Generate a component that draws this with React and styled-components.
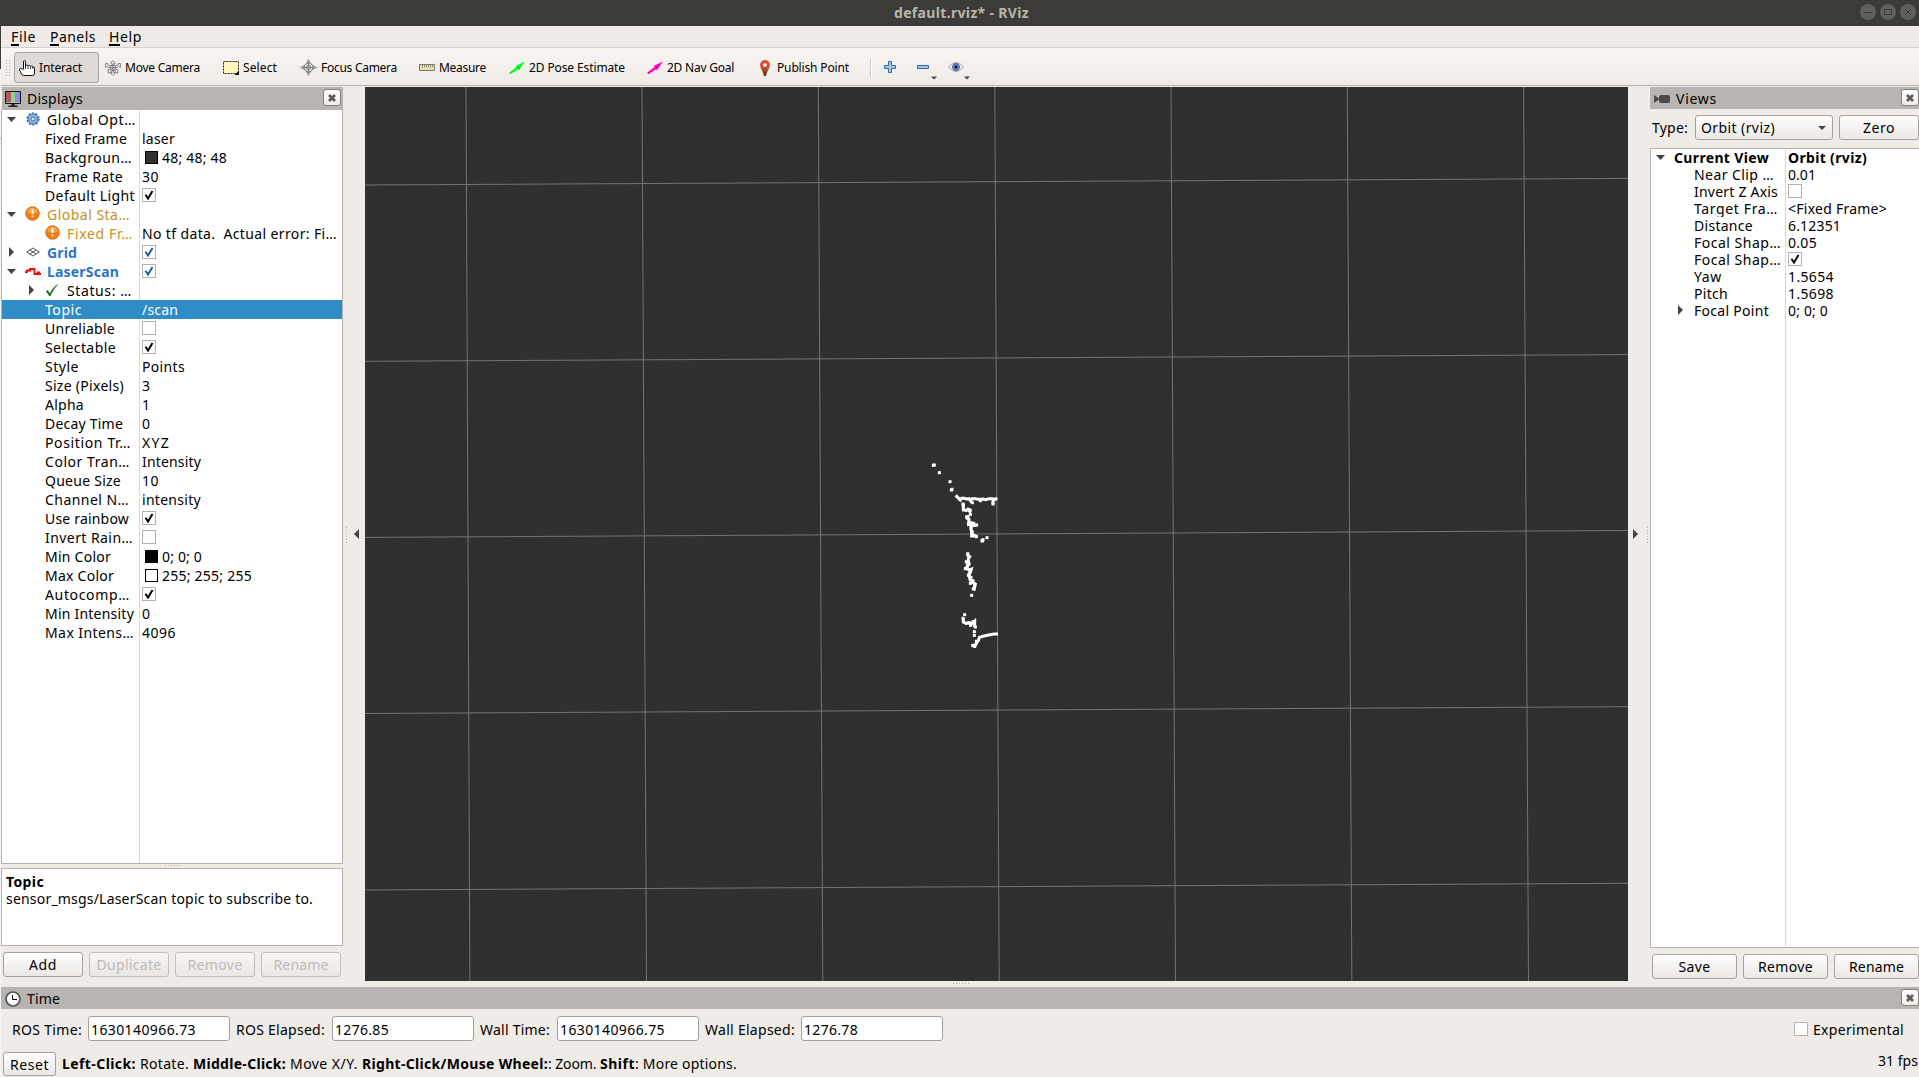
import React, { useLayoutEffect, useRef, useState } from 'react';
import styled, { createGlobalStyle, css, ThemeProvider } from 'styled-components';

const theme = {
  window: '#efebe7',
  titlebar: '#3c3b37',
  dock: '#b8b4b1',
  line: '#b4b0ad',
  selected: '#308cc6',
  link: '#2a76c6',
  warn: '#cb901b',
  dark: '#303030',
  bold: 700,
  fontSize: { s: '12px', m: '14px' },
};

const GlobalStyle = createGlobalStyle`
  *, *::before, *::after {
    box-sizing: border-box;
  }

  body {
    margin: 0;
    overflow: hidden;
    font-family: 'Noto Sans', 'Open Sans', sans-serif;
    font-size: 14px;
    color: #000;
  }

  svg {
    display: block;
    flex-shrink: 0;
  }
`;

const StyledText = styled.span.withConfig({
  shouldForwardProp: prop => !['small', 'bold'].includes(prop),
})`
  display: inline-block;
  white-space: pre;
  font-size: ${({ small, theme }) => (small ? theme.fontSize.s : theme.fontSize.m)};
  font-weight: ${({ bold, theme }) => (bold ? theme.bold : 400)};
`;

// spreads the letters so that a label takes the given width
const Text = ({ w, children, ...rest }) => {
  const ref = useRef(null);
  const [spacing, setSpacing] = useState(0);

  useLayoutEffect(() => {
    if (w) {
      const natural = ref.current.getBoundingClientRect().width;
      setSpacing((w + 1 - natural) / ref.current.textContent.length);
    }
  }, [w]);

  return (
    <StyledText ref={ref} style={{ letterSpacing: `${spacing}px` }} {...rest}>
      {children}
    </StyledText>
  );
};

const Window = styled.div`
  width: 1919px;
  height: 1077px;
  padding-left: 1px;
  display: flex;
  flex-direction: column;
  overflow: hidden;
  background: linear-gradient(#3c3b37 69px, #f6f5f4 69px, #f6f5f4 138px, #bbb 138px, #bbb 139px, #f6f5f4 139px) 0 0 / 1px
    100% no-repeat ${({ theme }) => theme.window};
`;

const TitleBar = styled.header`
  flex: none;
  height: 26px;
  margin-left: -1px;
  padding: 0 3px 0 894px;
  display: flex;
  align-items: center;
  justify-content: space-between;
  line-height: 24px;
  color: #b9b5a9;
  background: ${({ theme }) => theme.titlebar};
`;

const WindowButtons = styled.div`
  display: flex;
  gap: 4px;
  padding-bottom: 2px;
`;

const WindowButton = styled.span`
  width: 16px;
  height: 16px;
  border-radius: 50%;
  background: #62605b;
`;

const MenuBar = styled.nav`
  flex: none;
  height: 22px;
  padding-left: 10px;
  display: flex;
  line-height: 21px;
  border-bottom: 1px solid #d3cfcb;
`;

const MenuItem = styled.span`
  width: ${({ $width }) => $width}px;

  u {
    text-underline-offset: 2px;
    text-decoration-thickness: 2px;
  }
`;

const ToolBar = styled.div`
  flex: none;
  height: 38px;
  padding: 4px 0 2px 4px;
  display: flex;
  border-bottom: 1px solid #b6b2ae;
  background: linear-gradient(#f8f5f2, #efebe7);
`;

const ToolGrip = styled.i`
  width: 5px;
  height: 17px;
  margin: 7px 4px 0 0;
  background: radial-gradient(circle at 50% 50%, #aeaaa6 0.5px, transparent 1px) 0 0 / 3px 3px;
`;

const Tool = styled.div`
  flex: none;
  width: ${({ $width }) => $width}px;
  height: 31px;
  padding-left: 4px;
  display: flex;
  align-items: center;
  gap: 4px;
  border: 1px solid transparent;
  border-radius: 3px;
  line-height: 16px;

  ${({ $active }) =>
    $active &&
    css`
      margin-right: 1px;
      border-color: #aaa6a3;
      background: #dedad7;
    `}
`;

const Separator = styled.i`
  width: 2px;
  height: 19px;
  margin-top: 6px;
  border-left: 1px solid #d0ccc8;
  background: #fff;
`;

const ActionList = styled.div`
  display: flex;
  align-items: flex-start;
  padding: 9px 0 0 12px;
`;

const Action = styled.span`
  width: ${({ $width }) => $width}px;
`;

const Workspace = styled.main`
  flex: none;
  height: 901px;
  padding-top: 1px;
  display: grid;
  grid-template-columns: 342px 22px 1263px 22px 269px;
`;

const Dock = styled.section`
  min-height: 0;
  display: flex;
  flex-direction: column;
`;

const DockTitle = styled.div`
  flex: none;
  height: ${({ $height }) => $height || 22}px;
  margin-left: ${({ $indent }) => $indent || 0}px;
  padding: 1px ${({ $end }) => $end || 0}px 0 ${({ $pad }) => $pad}px;
  display: flex;
  align-items: center;
  gap: 6px;
  line-height: 22px;
  background: ${({ theme }) => theme.dock};
`;

const CloseButton = styled.span`
  align-self: flex-start;
  width: 18px;
  height: 17px;
  margin: 1px 0 0 auto;
  display: grid;
  place-items: center;
  border: 1px solid #85817e;
  border-radius: 3px;
  background: linear-gradient(#fff, #eeebe8);
`;

const Tree = styled.div`
  flex: none;
  height: ${({ $height }) => $height}px;
  border: solid ${({ theme }) => theme.line};
  border-width: ${({ $open }) => ($open ? '1px 0 1px 1px' : '0 1px 1px')};
  background: linear-gradient(#d8d8d8, #d8d8d8) ${({ $divider }) => $divider}px 0 / 1px 100% no-repeat #fff;
`;

const Row = styled.div`
  height: ${({ $height }) => $height}px;
  line-height: ${({ $height }) => $height}px;
  display: grid;
  grid-template-columns: ${({ $divider }) => $divider}px 1fr;

  ${({ $selected, theme }) =>
    $selected &&
    css`
      color: #fff;
      background: ${theme.selected};
    `}
`;

const NameCell = styled.div`
  padding-left: ${({ $indent }) => $indent}px;
  display: flex;
  overflow: hidden;
`;

const Slot = styled.span`
  flex: none;
  width: ${({ $width }) => $width}px;
  height: 100%;
  padding-bottom: 2px;
  display: flex;
  align-items: center;
`;

const Name = styled.span`
  color: ${({ $color }) => $color || 'inherit'};
`;

const ValueCell = styled.div`
  padding-left: 3px;
  display: flex;
`;

const Box = styled.span`
  flex: none;
  width: 14px;
  height: 14px;
  margin-top: ${({ $top }) => $top || 0}px;
  display: grid;
  place-items: center;
  border: 1px solid #b5b1ae;
  background: #fff;
`;

const Swatch = styled.span`
  width: 13px;
  height: 13px;
  margin: 3px 4px 0 3px;
  border: 1px solid #000;
  background: ${({ color }) => color};
`;

const Grip = styled.i`
  width: ${({ $vertical }) => ($vertical ? 1 : 17)}px;
  height: ${({ $vertical }) => ($vertical ? 17 : 1)}px;
  background: repeating-linear-gradient(
    ${({ $vertical }) => ($vertical ? '180deg' : '90deg')},
    #b3afab 0 1px,
    transparent 1px 3px
  );
`;

const Splitter = styled.div`
  height: ${({ $height }) => $height}px;
  padding: ${({ $padding }) => $padding};
  display: flex;
  align-items: flex-start;
  justify-content: center;
`;

const SideHandle = styled.div`
  height: 894px;
  padding: ${({ $right }) => ($right ? '440px 2px 0 5px' : '440px 6px 0 3px')};
  display: flex;
  justify-content: space-between;
  align-items: flex-start;

  svg {
    margin-top: 2px;
  }
`;

const Description = styled.div`
  flex: none;
  height: 78px;
  padding: 4px 4px 0;
  display: flex;
  flex-direction: column;
  align-items: flex-start;
  line-height: 17px;
  border: 1px solid ${({ theme }) => theme.line};
  background: #fff;
`;

const ButtonRow = styled.div`
  display: flex;
  gap: 6px;
  padding: 6px 0 0 2px;
`;

const Button = styled.button`
  flex: none;
  width: ${({ $width }) => $width}px;
  height: ${({ $height }) => $height || 25}px;
  padding: 0;
  font: inherit;
  line-height: 23px;
  color: #000;
  border: 1px solid #a5a19e;
  border-radius: 3px;
  background: linear-gradient(#fefefd, #ebe8e5);

  &:disabled {
    color: #bebbb8;
    border-color: #c3bfbc;
    background: linear-gradient(#f6f4f2, #eae7e4);
  }
`;

const TypeRow = styled.div`
  height: 39px;
  padding: 6px 0 0 2px;
  display: flex;
  line-height: 25px;
`;

const Select = styled.div`
  width: 138px;
  height: 25px;
  margin: 0 6px 0 auto;
  padding: 0 6px 0 5px;
  display: flex;
  align-items: center;
  justify-content: space-between;
  line-height: 23px;
  border: 1px solid #a5a19e;
  border-radius: 3px;
  background: linear-gradient(#fefefd, #ebe8e5);
`;

const TimeRow = styled.div`
  flex: none;
  height: 43px;
  padding: 7px 15px 0 11px;
  display: flex;
  line-height: 28px;
`;

const FieldLabel = styled.span`
  width: ${({ $width }) => $width}px;
`;

const Field = styled.div`
  width: 142px;
  height: 25px;
  margin-right: 6px;
  padding-left: 2px;
  line-height: 25px;
  border: 1px solid #a5a19e;
  border-radius: 3px;
  background: #fff;
`;

const Experimental = styled.label`
  margin-left: auto;
  display: flex;
  gap: 5px;
`;

const StatusBar = styled.footer`
  flex: none;
  height: 25px;
  padding-left: 2px;
  display: flex;
  line-height: 23px;
`;

const Hint = styled.div`
  margin-left: 6px;
  display: flex;
`;

const Fps = styled.span`
  width: 41px;
  margin-left: auto;
  margin-top: -3px;
  white-space: nowrap;
`;

const Arrow = ({ open }) => (
  <svg width="9" height="10" viewBox="0 0 9 10" fill="#454340">
    {open ? <path d="M0 3h9L4.500 8z" /> : <path d="M2 0v10l5-5z" />}
  </svg>
);

const Check = ({ color = '#000' }) => (
  <svg width="10" height="10" viewBox="0 0 10 10" fill="none" stroke={color} strokeWidth="2">
    <path d="M1.500 4.800l2.500 3.700L8.500 1" />
  </svg>
);

const CloseIcon = () => (
  <svg width="8" height="8" viewBox="0 0 8 8" stroke="#5e5b58" strokeWidth="2.800">
    <path d="M1 1l6 6M7 1L1 7" />
  </svg>
);

const GearIcon = () => (
  <svg width="15" height="14" viewBox="-1 0 15 14">
    <circle cx="7" cy="7" r="5.700" fill="none" stroke="#3768ad" strokeWidth="1.800" strokeDasharray="2.200 1.380" />
    <circle cx="7" cy="7" r="5" fill="#91b4df" stroke="#4778ba" />
    <circle cx="7" cy="7" r="2" fill="#e2ebf6" stroke="#4272b3" />
  </svg>
);

const WarnIcon = () => (
  <svg width="15" height="15" viewBox="0 0 16 16">
    <circle cx="8" cy="8" r="7.200" fill="#f57c12" stroke="#ce681a" />
    <path d="M2.500 7a5.500 5.500 0 0 1 11 0q-5.500 2-11 0" fill="#fba04b" />
    <path d="M8 3.500v5M8 10v2" stroke="#fff" strokeWidth="2" />
  </svg>
);

const GridIcon = () => (
  <svg width="15" height="10" viewBox="-1 0 15 10" fill="none" stroke="#555">
    <path d="M.7 5L7 1l6.300 4L7 9zM3.800 3l6.300 4M10.200 3L3.800 7" />
  </svg>
);

const ScanIcon = () => (
  <svg width="16" height="10" viewBox="0 0 16 10" fill="none" stroke="#f00" strokeWidth="1.800">
    <path d="M0 6.200h2V4.500h3V3h4.500v5h3V6.500h1.500V8h2" />
  </svg>
);

const OkIcon = () => (
  <svg width="14" height="14" viewBox="0 0 14 14">
    <path d="M.8 8.200l2-1.200 2 3.200C7 6 9.500 3 13.500.7 10 4.500 7.500 8.500 5.500 13H4.200z" fill="#1f7a1f" />
  </svg>
);

const MonitorIcon = () => (
  <svg width="16" height="16" viewBox="0 0 16 16">
    <path d="M1 1h5v10H1z" fill="#b05b60" />
    <path d="M6 1h4v10H6z" fill="#8ed48e" />
    <path d="M10 1h5v10h-5z" fill="#8f8fe0" />
    <path d="M.5.5h15v12H.5z" fill="none" stroke="#111" />
    <path d="M6.500 13h3v1.500h3V16h-9v-1.500h3z" fill="#222" />
  </svg>
);

const CameraIcon = () => (
  <svg width="16" height="10" viewBox="0 0 16 10" fill="#4c4a48">
    <path d="M0 1l5 3.500V3Q5 1 7 1h7q2 0 2 2v4q0 2-2 2H7Q5 9 5 7V5.500L0 9z" />
  </svg>
);

const ClockIcon = () => (
  <svg width="16" height="16" viewBox="0 0 16 16">
    <circle cx="8" cy="8" r="7" fill="#fff" stroke="#555" strokeWidth="1.700" />
    <path d="M7.500 4v4.500H12" fill="none" stroke="#000" />
  </svg>
);

const HandIcon = () => (
  <svg width="16" height="16" viewBox="0 0 16 16">
    <path
      d="M4.500 9V1.500Q4.500.5 5.500.5t1 1V6q.2-1 1.200-1T9 6q.2-.6 1.200-.6T11.500 6.500q.2-.6 1.100-.6t1.200 1q1.700-.4 1.700 1.300V13q0 2.500-2 2.500H4.500Q3 15.500 2 13L.6 10Q.2 8.500 1.500 8.300T4.500 10"
      fill="#fff"
      stroke="#111"
    />
    <path d="M6.500 6v3M9 6v3M11.500 6.500V9M13.800 7v2" stroke="#111" strokeWidth=".8" />
  </svg>
);

const MoveIcon = () => (
  <svg width="16" height="16" viewBox="0 0 16 16" fill="#fff" stroke="#666" strokeWidth=".8">
    <path d="M8 .6L5.500 3h1.600v2h1.800V3h1.600z" />
    <path d="M.6 3.500v4l1.200-1 3.500 1.300.7-1.700L2.500 4.800l.2-1.500zM15.400 3.500v4l-1.200-1-3.500 1.300-.7-1.700 3.500-1.300-.2-1.500z" />
    <path d="M3 9.500l.3 3.500 3-.5-1-.8 1.500-2-1.400-1-1.300 1.500zM13 9.500l-.3 3.500-3-.5 1-.8-1.500-2 1.400-1 1.300 1.500z" />
    <path d="M7.100 10.500v2.300H5.500L8 15.400l2.500-2.600H8.900v-2.300z" />
    <circle cx="8" cy="7.800" r="2.800" fill="#ddd" />
    <path d="M5.200 7.800h5.600M8 5v5.600" />
  </svg>
);

const SelectIcon = () => (
  <svg width="16" height="14" viewBox="0 0 16 14">
    <path d="M.5.500h15v12H.5z" fill="#fff6bd" stroke="#222" strokeDasharray="2 1" />
    <path d="M16 9.500V14h-4.500z" fill="#000" />
  </svg>
);

const FocusIcon = () => (
  <svg width="17" height="17" viewBox="0 0 17 17" fill="#fff" stroke="#777">
    <path d="M8.500.5L6.800 4h3.400zM8.500 16.500L6.800 13h3.400zM.5 8.500L4 6.800v3.400zM16.500 8.500L13 6.800v3.400z" strokeWidth=".8" />
    <circle cx="8.500" cy="8.500" r="4.500" fill="#d8d6d4" />
    <circle cx="8.500" cy="8.500" r="2" />
    <path d="M8.500 2.500v12M2.500 8.500h12" strokeWidth=".8" />
  </svg>
);

const RulerIcon = () => (
  <svg width="16" height="7" viewBox="0 0 16 7">
    <path d="M.5.5h15v6H.5z" fill="#ebe0a8" stroke="#777" />
    <path d="M3.500 1v2.500M5.500 1v2M7.500 1v2.500M9.500 1v2M11.500 1v2.500M13.500 1v2" stroke="#777" strokeWidth=".8" />
  </svg>
);

const PoseIcon = ({ color }) => (
  <svg width="16" height="14" viewBox="0 0 16 14">
    <path d="M16 .5L6.500 5l1.500.8L.3 11.500l1 1.700L9.500 8v2z" fill={color} />
    <path d="M8.500 5.500l1.500 1-1 1z" fill="#333" />
  </svg>
);

const PinIcon = () => (
  <svg width="13" height="16" viewBox="0 0 13 16">
    <defs>
      <linearGradient id="pin" x2="0" y2="1">
        <stop offset=".4" stopColor="#dc5238" />
        <stop offset="1" stopColor="#4a321c" />
      </linearGradient>
    </defs>
    <path d="M5 0a5 5 0 0 1 5 5c0 3-3 6-4 11H4C3 11 0 8 0 5a5 5 0 0 1 5-5" fill="url(#pin)" />
    <circle cx="5" cy="5" r="1.800" fill="#fff" />
  </svg>
);

const PlusIcon = () => (
  <svg width="12" height="12" viewBox="0 0 12 12" fill="#a9c6e8" stroke="#3566a8">
    <path d="M4.500.5h3v4h4v3h-4v4h-3v-4h-4v-3h4z" />
  </svg>
);

const MinusIcon = () => (
  <svg width="21" height="19" viewBox="0 0 21 19">
    <path d="M.5 4.500h11v3H.5z" fill="#a9c6e8" stroke="#3566a8" />
    <path d="M14 15.500h6l-3 3z" fill="#454340" />
  </svg>
);

const EyeIcon = () => (
  <svg width="22" height="19" viewBox="0 0 22 19">
    <path d="M.5 6Q8-3 15.500 6 8 15 .5 6z" fill="#eee" stroke="#a9a6a4" />
    <circle cx="8" cy="6" r="3.500" fill="#6a83c8" stroke="#465fa0" />
    <circle cx="8" cy="6" r="1.400" fill="#000" />
    <path d="M16 15.500h6l-3 3z" fill="#454340" />
  </svg>
);

const icons = {
  gear: <GearIcon />,
  warn: <WarnIcon />,
  grid: <GridIcon />,
  scan: <ScanIcon />,
  ok: <OkIcon />,
};

// w and vw are the drawn widths of the name and of the value
const displays = [
  { name: 'Global Opt…', w: 88, icon: 'gear', arrow: 'open', level: 0 },
  { name: 'Fixed Frame', w: 81, value: 'laser', vw: 32 },
  { name: 'Backgroun…', w: 86, value: '48; 48; 48', vw: 64, swatch: '#303030' },
  { name: 'Frame Rate', w: 77, value: '30', vw: 16 },
  { name: 'Default Light', w: 89, check: true },
  { name: 'Global Sta…', w: 82, icon: 'warn', arrow: 'open', level: 0, color: theme.warn },
  { name: 'Fixed Fr…', w: 65, icon: 'warn', color: theme.warn, value: 'No tf data.  Actual error: Fi…', vw: 194 },
  { name: 'Grid', w: 29, icon: 'grid', arrow: 'closed', level: 0, color: theme.link, bold: true, check: true },
  { name: 'LaserScan', w: 71, icon: 'scan', arrow: 'open', level: 0, color: theme.link, bold: true, check: true },
  { name: 'Status: …', w: 64, icon: 'ok', arrow: 'closed' },
  { name: 'Topic', w: 36, value: '/scan', vw: 35, selected: true },
  { name: 'Unreliable', w: 69, check: false },
  { name: 'Selectable', w: 70, check: true },
  { name: 'Style', w: 33, value: 'Points', vw: 42 },
  { name: 'Size (Pixels)', w: 78, value: '3' },
  { name: 'Alpha', w: 38, value: '1' },
  { name: 'Decay Time', w: 77, value: '0' },
  { name: 'Position Tr…', w: 85, value: 'XYZ', vw: 27 },
  { name: 'Color Tran…', w: 84, value: 'Intensity', vw: 58 },
  { name: 'Queue Size', w: 75, value: '10', vw: 16 },
  { name: 'Channel N…', w: 83, value: 'intensity', vw: 58 },
  { name: 'Use rainbow', w: 83, check: true },
  { name: 'Invert Rain…', w: 87, check: false },
  { name: 'Min Color', w: 65, value: '0; 0; 0', vw: 39, swatch: '#000' },
  { name: 'Max Color', w: 68, value: '255; 255; 255', vw: 89, swatch: '#fff' },
  { name: 'Autocomp…', w: 84, check: true },
  { name: 'Min Intensity', w: 88, value: '0' },
  { name: 'Max Intens…', w: 88, value: '4096', vw: 33 },
];

const views = [
  { name: 'Current View', w: 94, value: 'Orbit (rviz)', vw: 78, arrow: 'open', level: 0, bold: true },
  { name: 'Near Clip …', w: 79, value: '0.01', vw: 27 },
  { name: 'Invert Z Axis', w: 83, check: false },
  { name: 'Target Fra…', w: 83, value: '<Fixed Frame>', vw: 98 },
  { name: 'Distance', w: 58, value: '6.12351', vw: 52 },
  { name: 'Focal Shap…', w: 86, value: '0.05', vw: 28 },
  { name: 'Focal Shap…', w: 86, check: true },
  { name: 'Yaw', w: 27, value: '1.5654', vw: 45 },
  { name: 'Pitch', w: 33, value: '1.5698', vw: 45 },
  { name: 'Focal Point', w: 74, value: '0; 0; 0', vw: 39, arrow: 'closed' },
];

const tools = [
  { name: 'Interact', w: 42, width: 85, icon: <HandIcon />, active: true },
  { name: 'Move Camera', w: 74, width: 118, icon: <MoveIcon /> },
  { name: 'Select', w: 33, width: 77, icon: <SelectIcon /> },
  { name: 'Focus Camera', w: 75, width: 119, icon: <FocusIcon /> },
  { name: 'Measure', w: 46, width: 90, icon: <RulerIcon /> },
  { name: '2D Pose Estimate', w: 95, width: 138, icon: <PoseIcon color="#0f2" /> },
  { name: '2D Nav Goal', w: 66, width: 113, icon: <PoseIcon color="#f0c" /> },
  { name: 'Publish Point', w: 71, width: 115, icon: <PinIcon /> },
];

const times = [
  { label: 'ROS Time:', w: 69, width: 76, value: '1630140966.73', vw: 104 },
  { label: 'ROS Elapsed:', w: 88, width: 96, value: '1276.85', vw: 53 },
  { label: 'Wall Time:', w: 69, width: 77, value: '1630140966.75', vw: 104 },
  { label: 'Wall Elapsed:', w: 89, width: 96, value: '1276.78', vw: 53 },
];

const PropertyRow = ({ item, height, divider, wide }) => {
  const top = item.level === 0;
  const hasIcon = Boolean(item.icon);
  const arrowStart = top ? 5 : 25;
  const iconStart = top ? 23 : 43;
  let labelStart = top ? 23 : 43;
  if (hasIcon) labelStart = top ? 45 : 65;

  return (
    <Row $height={height} $divider={divider} $selected={item.selected}>
      <NameCell $indent={arrowStart}>
        <Slot $width={(hasIcon ? iconStart : labelStart) - arrowStart}>
          {item.arrow && <Arrow open={item.arrow === 'open'} />}
        </Slot>
        {hasIcon && <Slot $width={labelStart - iconStart}>{icons[item.icon]}</Slot>}
        <Name $color={item.color}>
          <Text w={item.w} bold={item.bold}>
            {item.name}
          </Text>
        </Name>
      </NameCell>
      <ValueCell>
        {item.swatch && <Swatch color={item.swatch} />}
        {item.check !== undefined && (
          <Box $top={wide ? 2 : 1}>{item.check && <Check color={item.color && '#1c5f9e'} />}</Box>
        )}
        {item.value && (
          <Text w={item.vw} bold={item.bold}>
            {item.value}
          </Text>
        )}
      </ValueCell>
    </Row>
  );
};

const verticals = [
  [466, 469.9],
  [642, 646.5],
  [818.3, 822.8],
  [994.8, 999.2],
  [1171, 1175.5],
  [1347.3, 1351.8],
  [1523.6, 1528.5],
];

const horizontals = [
  [185, 178.4],
  [361.3, 354.6],
  [537.4, 530.5],
  [713.5, 706.7],
  [890, 883.3],
];

const dots = [
  [100, 76], [103, 75], [118, 98], [150, 125], [154, 150], [156, 148], [189, 192], [190, 197], [211, 223],
  [209, 210], [217, 188], [241, 182], [222, 256], [230, 255], [229, 290], [246, 302], [249, 299], [261, 293],
  [247, 303], [215, 466], [194, 524], [189, 535], [223, 575], [223, 586], [220, 446], [209, 212], [203, 343],
  [196, 386], [213, 389], [209, 414], [224, 437], [212, 556], [226, 561], [218, 616], [224, 619], [279, 192],
  [206, 250], [213, 262], [217, 276], [222, 286], [199, 365], [207, 371], [202, 378], [211, 396], [205, 405],
  [211, 430], [216, 424], [207, 548], [219, 545], [229, 604], [221, 250], [204, 230],
];

// grid and laser points, in window coordinates
const Viewport = () => (
  <svg width="1263" height="894" viewBox="365 87 1263 894">
    <path d="M365 87h1263v894H365z" fill={theme.dark} />
    <g stroke="#747474" strokeWidth="1">
      {verticals.map(([a, b]) => (
        <line key={a} x1={a} y1="87" x2={b} y2="981" />
      ))}
      {horizontals.map(([a, b]) => (
        <line key={a} x1="365" y1={a} x2="1628" y2={b} />
      ))}
    </g>
    <g transform="translate(900 440) scale(.33333)" fill="none" stroke="#fff" strokeWidth="9">
      <path d="M167 166l6 6 8 8 4-5h8l6 2 8-1 4 6 5-6h10l8 2h8l8-1 8 2 8-3h10l8 2 8-4M279 178v14M286 174v8" />
      <path d="M190 190v20l10 1 4-4 7 4-3 7M200 226v8l7 4-1 14 9-4 10 7 6 1M206 250l8 6-1 12 2 8v12l12 0 4 3" />
      <path d="M203 337l1 10 5 3-4 6v8l-4 4 5 6-4 6-4 6 10 4 5-2-4 10-2 10 6 4-2 8 8 2v6l7 4-2 8-2 12" />
      <path d="M190 534v12l8 4 10-2 4 6 6-4 6-6v18M216 616l8 3 6-11 6-8 2-8 14-4 14-3 16-3h12" />
    </g>
    <g fill="#fff" transform="translate(900 440) scale(.33333)">
      {dots.map(([x, y]) => (
        <rect key={`${x}-${y}`} x={x - 4.500} y={y - 4.500} width="9" height="9" />
      ))}
    </g>
  </svg>
);

const App = () => (
  <ThemeProvider theme={theme}>
    <GlobalStyle />
    <Window>
      <TitleBar>
        <Text w={134} bold>
          default.rviz* - RViz
        </Text>
        <WindowButtons>
          {['M4 8.500h8', 'M4.500 5.500h7v5h-7z', 'M5 5l6 6M11 5l-6 6'].map(d => (
            <WindowButton key={d}>
              <svg width="16" height="16" viewBox="0 0 16 16" fill="none" stroke="#3c3b37">
                <path d={d} />
              </svg>
            </WindowButton>
          ))}
        </WindowButtons>
      </TitleBar>
      <MenuBar>
        <MenuItem $width={39}>
          <Text w={24}>
            <u>F</u>ile
          </Text>
        </MenuItem>
        <MenuItem $width={59}>
          <Text w={45}>
            <u>P</u>anels
          </Text>
        </MenuItem>
        <MenuItem $width={40}>
          <Text w={32}>
            <u>H</u>elp
          </Text>
        </MenuItem>
      </MenuBar>
      <ToolBar>
        <ToolGrip />
        {tools.map(({ name, w, width, icon, active }) => (
          <Tool key={name} $width={width} $active={active}>
            {icon}
            <Text small w={w}>
              {name}
            </Text>
          </Tool>
        ))}
        <Separator />
        <ActionList>
          <Action $width={33}>
            <PlusIcon />
          </Action>
          <Action $width={31}>
            <MinusIcon />
          </Action>
          <EyeIcon />
        </ActionList>
      </ToolBar>
      <Workspace>
        <Dock>
          <DockTitle $height={23} $indent={1} $pad={3} $end={2}>
            <MonitorIcon />
            <Text w={55}>Displays</Text>
            <CloseButton>
              <CloseIcon />
            </CloseButton>
          </DockTitle>
          <Tree $height={754} $divider={137}>
            {displays.map((item, i) => (
              <PropertyRow key={i} item={item} height={19} divider={137} wide />
            ))}
          </Tree>
          <Splitter $height={4} $padding="1px 0 0 3px">
            <Grip />
          </Splitter>
          <Description>
            <Text w={37} bold>
              Topic
            </Text>
            <Text w={306}>sensor_msgs/LaserScan topic to subscribe to.</Text>
          </Description>
          <ButtonRow>
            <Button $width={80}>
              <Text w={27}>Add</Text>
            </Button>
            <Button $width={80} disabled>
              <Text w={64}>Duplicate</Text>
            </Button>
            <Button $width={80} disabled>
              <Text w={54}>Remove</Text>
            </Button>
            <Button $width={80} disabled>
              <Text w={54}>Rename</Text>
            </Button>
          </ButtonRow>
        </Dock>
        <SideHandle>
          <Grip $vertical />
          <svg width="5" height="10" viewBox="0 0 5 10" fill="#454340">
            <path d="M5 0v10L0 5z" />
          </svg>
        </SideHandle>
        <div>
          <Viewport />
          <Splitter $height={6} $padding="2px 70px 0 0">
            <Grip />
          </Splitter>
        </div>
        <SideHandle $right>
          <svg width="5" height="10" viewBox="0 0 5 10" fill="#454340">
            <path d="M0 0v10l5-5z" />
          </svg>
          <Grip $vertical />
        </SideHandle>
        <Dock>
          <DockTitle $pad={4}>
            <CameraIcon />
            <Text w={40}>Views</Text>
            <CloseButton>
              <CloseIcon />
            </CloseButton>
          </DockTitle>
          <TypeRow>
            <Text w={35}>Type:</Text>
            <Select>
              <Text w={73}>Orbit (rviz)</Text>
              <svg width="8" height="4" viewBox="0 0 8 4" fill="#454340">
                <path d="M0 0h8L4 4z" />
              </svg>
            </Select>
            <Button $width={80}>
              <Text w={31}>Zero</Text>
            </Button>
          </TypeRow>
          <Tree $height={800} $divider={134} $open>
            {views.map((item, i) => (
              <PropertyRow key={i} item={item} height={17} divider={134} />
            ))}
          </Tree>
          <ButtonRow>
            <Button $width={85}>
              <Text w={31}>Save</Text>
            </Button>
            <Button $width={85}>
              <Text w={54}>Remove</Text>
            </Button>
            <Button $width={85}>
              <Text w={54}>Rename</Text>
            </Button>
          </ButtonRow>
        </Dock>
      </Workspace>
      <DockTitle $pad={4}>
        <ClockIcon />
        <Text w={32}>Time</Text>
        <CloseButton>
          <CloseIcon />
        </CloseButton>
      </DockTitle>
      <TimeRow>
        {times.map(({ label, w, width, value, vw }) => (
          <React.Fragment key={label}>
            <FieldLabel $width={width}>
              <Text w={w}>{label}</Text>
            </FieldLabel>
            <Field>
              <Text w={vw}>{value}</Text>
            </Field>
          </React.Fragment>
        ))}
        <Experimental>
          <Box $top={6} />
          <Text w={90}>Experimental</Text>
        </Experimental>
      </TimeRow>
      <StatusBar>
        <Button $width={53} $height={24}>
          <Text w={38}>Reset</Text>
        </Button>
        <Hint>
          <Text w={77} bold>{'Left-Click: '}</Text>
          <Text w={52}>{'Rotate. '}</Text>
          <Text w={96} bold>{'Middle-Click: '}</Text>
          <Text w={71}>{'Move X/Y. '}</Text>
          <Text w={185} bold>
            Right-Click/Mouse Wheel:
          </Text>
          <Text w={51}>{': Zoom. '}</Text>
          <Text w={34} bold>
            Shift
          </Text>
          <Text w={101}>: More options.</Text>
        </Hint>
        <Fps>
          <Text w={39}>31 fps</Text>
        </Fps>
      </StatusBar>
    </Window>
  </ThemeProvider>
);

export default App;
